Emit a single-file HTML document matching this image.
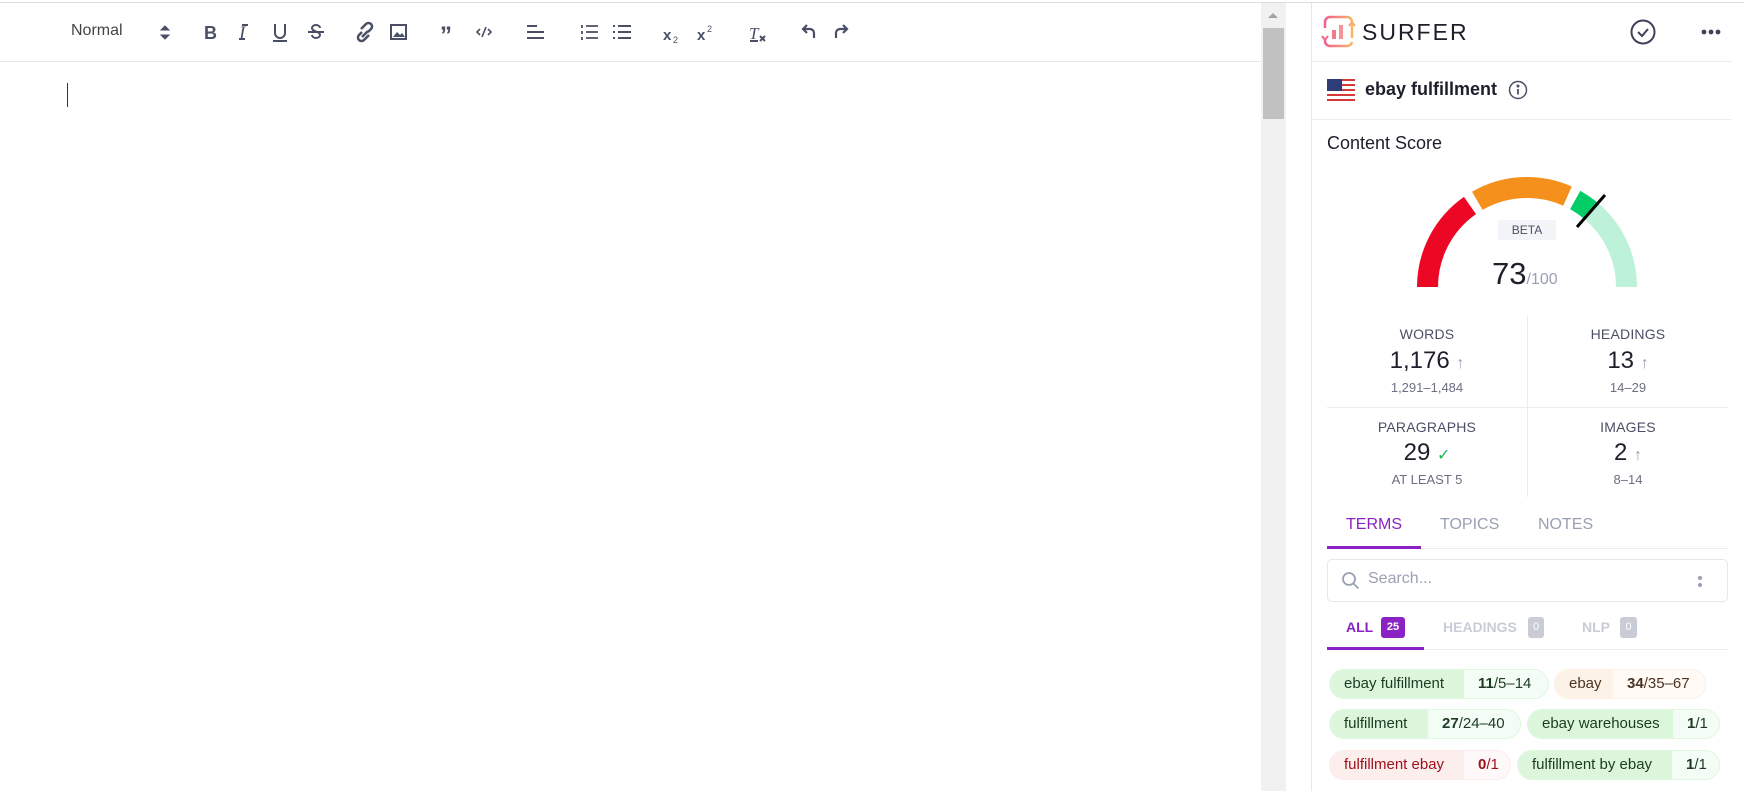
<!DOCTYPE html>
<html><head><meta charset="utf-8"><style>
*{margin:0;padding:0;box-sizing:border-box}
body{width:1744px;height:791px;background:#fff;position:relative;overflow:hidden;font-family:"Liberation Sans",sans-serif}
.a{position:absolute}
.lato{font-family:"Liberation Sans","DejaVu Sans",sans-serif}
.c{text-align:center;position:absolute}
.lbl{font-size:14px;color:#4b4f66;letter-spacing:.2px}
.num{font-size:24px;color:#1d1f2b}
.rng{font-size:13px;color:#6b6f80}
.pill{position:absolute;height:30px;border-radius:15px;font-size:15px;display:flex;overflow:hidden;line-height:28px;white-space:nowrap}
.pill span{padding:0 14px;white-space:nowrap;flex-shrink:0}
</style></head><body>
<div class="a" style="left:0;top:2px;width:1744px;height:1px;background:#ddd"></div>
<div class="a" style="left:0;top:61px;width:1261px;height:1px;background:#e8e8e8"></div>
<div class="a" style="left:71px;top:22px;font-size:16px;color:#444">Normal</div>
<svg class="a" style="left:0;top:0" width="1261" height="60" fill="none" stroke="#4b4f66" stroke-width="2">
<path d="M161 30l4-4 4 4z M161 35l4 4 4-4z" fill="#4b4f66" stroke-width="1"/>
<text x="204" y="39" font-family="Liberation Sans" font-weight="bold" font-size="18" fill="#4b4f66" stroke="none">B</text>
<text x="239" y="39" font-family="Liberation Serif" font-style="italic" font-size="19" fill="#4b4f66" stroke="none">I</text>
<path d="M242 25h6 M239 39h6"/>
<path d="M275 24v9a5 5 0 0 0 10 0v-9 M273 41h14"/>
<path d="M320 28a4 3 0 0 0-8 0c0 4 8 3 8 7a4 3 0 0 1-8 0 M308 32h16"/>
<path d="M361 29l5-5a3 3 0 0 1 5 5l-3 3 M369 35l-5 5a3 3 0 0 1-5-5l3-3 M362 37l6-6" stroke-width="2.5"/>
<rect x="391" y="25" width="15" height="14"/><path d="M393 37l4-5 3 3 2-2 3 4z" fill="#4b4f66" stroke="none"/>
<text x="440" y="43" font-family="Liberation Sans" font-weight="bold" font-size="24" fill="#4b4f66" stroke="none">”</text>
<path d="M480 29l-3 3 3 3 M488 29l3 3-3 3 M486 27l-4 10" stroke-width="1.6"/>
<path d="M527 26h10 M527 32h17 M527 38h17"/>
<path d="M586 26h12 M586 32h12 M586 38h12 M582 25v3 M582 31v3 M582 37v3" stroke-width="1.8"/>
<path d="M618 26h13 M618 32h13 M618 38h13 M613 26h2 M613 32h2 M613 38h2"/>
<text x="663" y="40" font-family="Liberation Sans" font-weight="bold" font-size="15" fill="#4b4f66" stroke="none">x</text>
<text x="673" y="43" font-family="Liberation Sans" font-size="9" fill="#4b4f66" stroke="none">2</text>
<text x="697" y="40" font-family="Liberation Sans" font-weight="bold" font-size="15" fill="#4b4f66" stroke="none">x</text>
<text x="707" y="32" font-family="Liberation Sans" font-size="9" fill="#4b4f66" stroke="none">2</text>
<text x="749" y="39" font-family="Liberation Serif" font-style="italic" font-size="17" fill="#4b4f66" stroke="none">T</text>
<path d="M750 41h8 M760 36l5 5 M765 36l-5 5"/>
<path d="M814 38v-5a4 4 0 0 0-4-4h-7 M807 25l-4 4 4 4" stroke-width="2.2"/>
<path d="M836 38v-5a4 4 0 0 1 4-4h7 M843 25l4 4-4 4" stroke-width="2.2"/>
</svg>
<div class="a" style="left:67px;top:83px;width:1px;height:24px;background:#333"></div>
<div class="a" style="left:1261px;top:3px;width:25px;height:788px;background:#f1f1f1"></div>
<div class="a" style="left:1263px;top:28px;width:21px;height:91px;background:#c1c1c1"></div>
<div class="a" style="left:1268px;top:13px;width:0;height:0;border-left:5px solid transparent;border-right:5px solid transparent;border-bottom:5px solid #a3a3a3"></div>
<div class="a" style="left:1311px;top:3px;width:1px;height:788px;background:#e6e6e6"></div>
<svg class="a" style="left:1320px;top:14px" width="36" height="34" fill="none">
<defs><linearGradient id="g" x1="0" x2="1"><stop offset="0" stop-color="#f0608c"/><stop offset="1" stop-color="#f9b56a"/></linearGradient></defs>
<path d="M5 14v-6a5 5 0 0 1 5-5h17a5 5 0 0 1 5 5v16 M32 28a5 5 0 0 1-5 4h-17a5 5 0 0 1-5-5v-1" stroke="url(#g)" stroke-width="2.5"/>
<path d="M2 22l3 4 3-4 M29 12l3-4 3 4" stroke="url(#g)" stroke-width="2"/>
<rect x="12" y="16" width="4" height="9" fill="#f27a8c"/><rect x="19" y="11" width="4" height="14" fill="#f5959a"/>
</svg>
<div class="a" style="left:1362px;top:19px;font-size:23px;letter-spacing:2px;color:#1d1f2b">SURFER</div>
<svg class="a" style="left:1629px;top:18px" width="28" height="28" fill="none" stroke="#3f4257" stroke-width="2"><circle cx="14" cy="14" r="11.5"/><path d="M9 14l4 4 6-7"/></svg>
<svg class="a" style="left:1700px;top:27px" width="26" height="10" fill="#3f4257"><circle cx="4" cy="5" r="2.4"/><circle cx="11" cy="5" r="2.4"/><circle cx="18" cy="5" r="2.4"/></svg>
<div class="a" style="left:1312px;top:61px;width:420px;height:1px;background:#ececef"></div>
<svg class="a" style="left:1327px;top:79px" width="28" height="22">
<rect width="28" height="22" fill="#fff"/>
<g fill="#d43a3a"><rect y="0" width="28" height="2"/><rect y="5" width="28" height="2"/><rect y="10" width="28" height="2"/><rect y="15" width="28" height="2"/><rect y="20" width="28" height="2"/></g>
<rect width="15" height="12" fill="#2e3c78"/></svg>
<div class="a lato" style="left:1365px;top:79px;font-size:18px;font-weight:bold;color:#1d1f2b">ebay fulfillment</div>
<svg class="a" style="left:1508px;top:80px" width="20" height="20" fill="none" stroke="#4b4f66" stroke-width="1.5"><circle cx="10" cy="10" r="8.5"/><path d="M10 9v5.5" stroke-width="1.8"/><circle cx="10" cy="6" r=".8" fill="#4b4f66"/></svg>
<div class="a" style="left:1312px;top:119px;width:420px;height:1px;background:#ececef"></div>
<div class="a lato" style="left:1327px;top:133px;font-size:18px;color:#1d1f2b">Content Score</div>
<svg class="a" style="left:1407px;top:167px" width="240" height="122" fill="none" stroke-width="21">
<g transform="translate(120,120)">
<path d="M-99.5 0A99.5 99.5 0 0 1 -57 -81.5" stroke="#ec0824"/>
<path d="M-49.7 -86.2A99.5 99.5 0 0 1 40.5 -90.9" stroke="#f4901b"/>
<path d="M48.2 -87A99.5 99.5 0 0 1 63.9 -76.2" stroke="#02cd66"/>
<path d="M64 -76.2A99.5 99.5 0 0 1 99.5 0" stroke="#bdf1da"/>
<path d="M50 -60L78 -92" stroke="#000" stroke-width="3"/>
</g></svg>
<div class="a" style="left:1498px;top:220px;width:58px;height:20px;background:#f3f4f8;font-size:12px;color:#4b4f66;text-align:center;line-height:20px">BETA</div>
<div class="a" style="left:1492px;top:256px;font-size:31px;color:#1d1f2b">73<span style="font-size:16px;color:#9aa0b4">/100</span></div>
<div class="a" style="left:1527px;top:316px;width:1px;height:181px;background:#ececef"></div>
<div class="a" style="left:1327px;top:407px;width:401px;height:1px;background:#ececef"></div>
<div class="c lbl" style="left:1327px;width:200px;top:326px">WORDS</div>
<div class="c num" style="left:1327px;width:200px;top:347px">1,176 <span style="font-size:16px;color:#9aa0b4">↑</span></div>
<div class="c rng" style="left:1327px;width:200px;top:380px">1,291–1,484</div>
<div class="c lbl" style="left:1528px;width:200px;top:326px">HEADINGS</div>
<div class="c num" style="left:1528px;width:200px;top:347px">13 <span style="font-size:16px;color:#9aa0b4">↑</span></div>
<div class="c rng" style="left:1528px;width:200px;top:380px">14–29</div>
<div class="c lbl" style="left:1327px;width:200px;top:419px">PARAGRAPHS</div>
<div class="c num" style="left:1327px;width:200px;top:439px">29 <span style="font-size:16px;color:#1fb35a">✓</span></div>
<div class="c rng" style="left:1327px;width:200px;top:472px">AT LEAST 5</div>
<div class="c lbl" style="left:1528px;width:200px;top:419px">IMAGES</div>
<div class="c num" style="left:1528px;width:200px;top:439px">2 <span style="font-size:16px;color:#9aa0b4">↑</span></div>
<div class="c rng" style="left:1528px;width:200px;top:472px">8–14</div>
<div class="a" style="left:1346px;top:516px;font-size:16px;color:#8a22c6">TERMS</div>
<div class="a" style="left:1440px;top:516px;font-size:16px;color:#9aa0b4">TOPICS</div>
<div class="a" style="left:1538px;top:516px;font-size:16px;color:#9aa0b4">NOTES</div>
<div class="a" style="left:1327px;top:548px;width:401px;height:1px;background:#ececef"></div>
<div class="a" style="left:1327px;top:546px;width:94px;height:3px;background:#8a22c6"></div>
<div class="a" style="left:1327px;top:559px;width:401px;height:43px;border:1px solid #e5e6eb;border-radius:5px"></div>
<svg class="a" style="left:1341px;top:571px" width="20" height="20" fill="none" stroke="#9aa0b4" stroke-width="1.8"><circle cx="8" cy="8" r="6"/><path d="M12.5 12.5l5 5"/></svg>
<div class="a" style="left:1368px;top:570px;font-size:16px;color:#9aa0b4">Search...</div>
<svg class="a" style="left:1696px;top:574px" width="8" height="16" fill="#9aa0b4"><circle cx="4" cy="4" r="2"/><circle cx="4" cy="11" r="2"/></svg>
<div class="a" style="left:1346px;top:619px;font-size:14px;font-weight:bold;color:#8a22c6">ALL</div>
<div class="a" style="left:1381px;top:617px;width:24px;height:21px;background:#8a22c6;border-radius:3px;color:#fff;font-size:11px;font-weight:bold;text-align:center;line-height:21px">25</div>
<div class="a" style="left:1443px;top:619px;font-size:14px;font-weight:bold;color:#c9ccd6">HEADINGS</div>
<div class="a" style="left:1528px;top:617px;width:16px;height:21px;background:#c9ccd6;border-radius:3px;color:#fff;font-size:11px;text-align:center;line-height:21px">0</div>
<div class="a" style="left:1582px;top:619px;font-size:14px;font-weight:bold;color:#c9ccd6">NLP</div>
<div class="a" style="left:1620px;top:617px;width:17px;height:21px;background:#c9ccd6;border-radius:3px;color:#fff;font-size:11px;text-align:center;line-height:21px">0</div>
<div class="a" style="left:1327px;top:649px;width:401px;height:1px;background:#ececef"></div>
<div class="a" style="left:1327px;top:647px;width:97px;height:3px;background:#8a22c6"></div>
<div class="pill" style="left:1329px;top:669px;width:220px;border:1px solid #def7e0;color:#1d3b22"><span style="background:#dcf6dc;width:134px">ebay fulfillment</span><span style="background:#f3fcf5;flex:1"><b>11</b>/5–14</span></div>
<div class="pill" style="left:1554px;top:669px;width:152px;border:1px solid #fdf0e4;color:#4b3320"><span style="background:#fdf2e8;width:58px">ebay</span><span style="background:#fffaf6;flex:1"><b>34</b>/35–67</span></div>
<div class="pill" style="left:1329px;top:709px;width:192px;border:1px solid #def7e0;color:#1d3b22"><span style="background:#dcf6dc;width:98px">fulfillment</span><span style="background:#f3fcf5;flex:1"><b>27</b>/24–40</span></div>
<div class="pill" style="left:1527px;top:709px;width:193px;border:1px solid #def7e0;color:#1d3b22"><span style="background:#dcf6dc;width:145px">ebay warehouses</span><span style="background:#f3fcf5;flex:1"><b>1</b>/1</span></div>
<div class="pill" style="left:1329px;top:750px;width:182px;border:1px solid #fdeaea;color:#a0101c"><span style="background:#fdeeee;width:134px">fulfillment ebay</span><span style="background:#fff8f8;flex:1"><b>0</b>/1</span></div>
<div class="pill" style="left:1517px;top:750px;width:203px;border:1px solid #def7e0;color:#1d3b22"><span style="background:#dcf6dc;width:154px">fulfillment by ebay</span><span style="background:#f3fcf5;flex:1"><b>1</b>/1</span></div>
</body></html>
